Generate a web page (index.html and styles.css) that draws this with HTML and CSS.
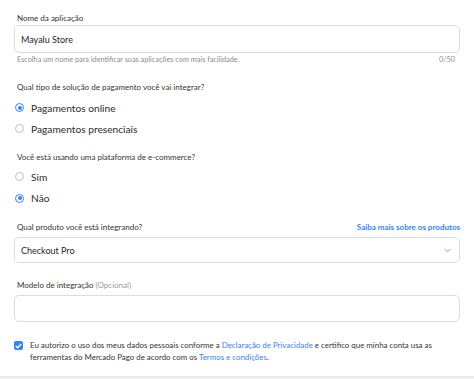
FILE: index.html
```html
<!DOCTYPE html>
<html lang="pt-BR">
<head>
<meta charset="utf-8">
<link rel="stylesheet" href="styles.css">
</head>
<body>
<div class="form">
  <div class="field f-name">
    <label class="label">Nome da aplicação</label>
    <div class="input i-name"><span class="value">Mayalu Store</span></div>
    <div class="helper"><span>Escolha um nome para identificar suas aplicações com mais facilidade.</span><span>0/50</span></div>
  </div>

  <div class="group g-type">
    <div class="question">Qual tipo de solução de pagamento você vai integrar?</div>
    <div class="radios">
      <div class="radio checked"><span class="dot"></span><span>Pagamentos online</span></div>
      <div class="radio"><span class="dot"></span><span>Pagamentos presenciais</span></div>
    </div>
  </div>

  <div class="group g-ecom">
    <div class="question">Você está usando uma plataforma de e-commerce?</div>
    <div class="radios r-ecom">
      <div class="radio"><span class="dot"></span><span>Sim</span></div>
      <div class="radio checked"><span class="dot"></span><span>Não</span></div>
    </div>
  </div>

  <div class="field f-product">
    <div class="label-row"><label class="label">Qual produto você está integrando?</label><a class="link-bold">Saiba mais sobre os produtos</a></div>
    <div class="input select"><span class="value">Checkout Pro</span>
      <svg class="chev" width="7" height="5" viewBox="0 0 7 5"><path d="M0.5 0.8 L3.5 3.8 L6.5 0.8" fill="none" stroke="#6f9be0" stroke-width="1"/></svg>
    </div>
  </div>

  <div class="field f-model">
    <label class="label">Modelo de integração <span class="opt">(Opcional)</span></label>
    <div class="input i-model"></div>
  </div>

  <div class="consent">
    <span class="box"><svg width="7" height="6" viewBox="0 0 7 6"><path d="M0.8 3 L2.7 4.8 L6.2 1" fill="none" stroke="#fff" stroke-width="1.3"/></svg></span>
    <p><span>Eu autorizo o uso dos meus dados pessoais conforme a </span><a class="link">Declaração de Privacidade</a><span> e certifico que minha conta usa as</span><br><span>ferramentas do Mercado Pago de acordo com os </span><a class="link">Termos e condições</a><span>.</span></p>
  </div>
</div>
<div class="footer"></div>
</body>
</html>
```

FILE: styles.css
```css
* { box-sizing: border-box; }
html, body { margin: 0; padding: 0; background: #fff; }
body {
  font-family: "Lato", "Liberation Sans", sans-serif;
  color: #333;
  width: 474px;
  height: 379px;
  overflow: hidden;
  position: relative;
}
.form { padding: 12px 14px 0 14px; }
.label { display: block; font-size: 8px; color: #333; padding-left: 3px; line-height: 12px; }
.label-row { display: flex; justify-content: space-between; align-items: center; }
.link-bold { color: #3483fa; font-size: 8px; font-weight: 700; line-height: 12px; }
.input {
  margin-top: 4px;
  height: 27px;
  border: 1px solid #dcdcdc;
  border-radius: 5px;
  display: flex;
  align-items: center;
  padding: 0 6px;
  justify-content: space-between;
}
.i-name { margin-top: 1px; height: 28px; }
.select { height: 26px; padding-right: 8px; }
.value { font-size: 9px; color: #262626; }
.helper {
  display: flex; justify-content: space-between;
  font-size: 7.3px; color: #8c8c8c;
  padding: 1px 5px 0 3px; line-height: 12px;
}
.g-type { margin-top: 15px; }
.question { font-size: 8px; color: #333; padding-left: 3px; line-height: 12px; }
.radios { margin-top: 4px; }
.r-ecom { margin-top: 3px; }
.radio { display: flex; align-items: center; height: 21px; font-size: 10.2px; color: #2b2b2b; padding-left: 1px; }
.r-ecom .radio + .radio { height: 22px; }
.dot {
  width: 9px; height: 9px; border-radius: 50%;
  border: 1px solid #bdbdbd; margin-right: 7px;
  position: relative;
}
.radio.checked .dot { border-color: #3483fa; }
.radio.checked .dot::after {
  content: ""; position: absolute; left: 1.5px; top: 1.5px;
  width: 4px; height: 4px; border-radius: 50%; background: #3483fa;
}
.g-ecom { margin-top: 12px; }
.f-product { margin-top: 12px; }
.f-model { margin-top: 16px; }
.opt { color: #9a9a9a; }
.consent { display: flex; margin-top: 17px; gap: 7px; align-items: flex-start; }
.box {
  flex: 0 0 auto;
  width: 9px; height: 9px; border-radius: 2px; background: #3483fa;
  display: flex; align-items: center; justify-content: center; margin-top: 2px;
}
.consent p { margin: 0; font-size: 7.9px; line-height: 12px; color: #333; }
.link { color: #3483fa; }
.footer {
  position: absolute; left: 0; right: 0; bottom: 0; height: 3px;
  background: #f0f0f0; border-top: 1px solid #e6e6e6;
}
```
